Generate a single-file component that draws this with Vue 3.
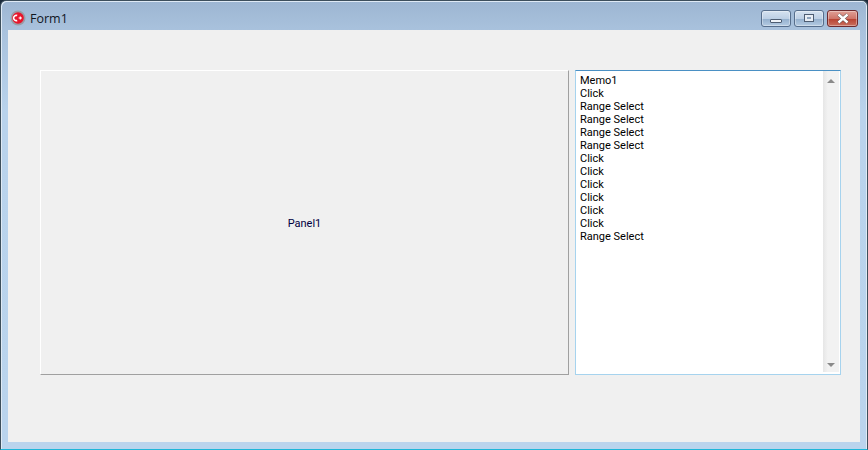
<script setup>
const lines = ['Memo1','Click','Range Select','Range Select','Range Select','Range Select','Click','Click','Click','Click','Click','Click','Range Select']
</script>

<template>
  <div class="window">
    <div class="titlebar">
      <svg class="appicon" width="16" height="16" viewBox="0 0 16 16">
        <circle cx="8" cy="8" r="7.5" fill="#9a9ca6" />
        <circle cx="8" cy="8" r="5.8" fill="#e8152c" />
        <path d="M7.2 5.6A2.6 2.6 0 1 0 7.2 10.4" fill="none" stroke="#fff" stroke-width="1.6" />
        <path d="M8.6 8h3.4M10.3 6.4v3.2" fill="none" stroke="#fff" stroke-width="1.2" />
      </svg>
      <span class="title">Form1</span>
      <div class="buttons">
        <div class="btn">
          <span class="min"></span>
        </div>
        <div class="btn">
          <span class="max"></span>
        </div>
        <div class="btn close">
          <svg width="14" height="11" viewBox="0 0 14 11">
            <path d="M2.5 1.5L11.5 9.5M11.5 1.5L2.5 9.5" stroke="#5a4a4a" stroke-width="3.6" fill="none" />
            <path d="M2.5 1.5L11.5 9.5M11.5 1.5L2.5 9.5" stroke="#fff" stroke-width="2.4" fill="none" />
          </svg>
        </div>
      </div>
    </div>
    <div class="client">
      <div class="panel">Panel1</div>
      <div class="memo">
        <div class="memotext">
          <div v-for="(l, i) in lines" :key="i" class="line">{{ l }}</div>
        </div>
        <div class="scroll">
          <span class="arrow up"></span>
          <span class="arrow down"></span>
        </div>
      </div>
    </div>
  </div>
</template>

<style>
html, body { margin: 0; background: #1a2a3a; }
</style>

<style scoped>
.window {
  width: 868px;
  height: 450px;
  box-sizing: border-box;
  display: flex;
  flex-direction: column;
  border: 1px solid #3d4f5c;
  border-bottom-color: #1fb6d8;
  border-radius: 6px 6px 0 0;
  padding: 0 7px 7px;
  background: linear-gradient(180deg, #9db6d2 0, #a9c2dd 30px, #b9d3ec 110px, #bad4ed 100%);
  box-shadow: inset 1px 1px 0 #dfeaf5, inset -1px 0 0 #dfeaf5;
  overflow: hidden;
}
.titlebar {
  height: 29px;
  flex: none;
  display: flex;
  align-items: center;
  padding: 5px 0 0 2px;
  box-sizing: border-box;
}
.title {
  margin-left: 4px;
  margin-top: 1px;
  font: 12.5px "Open Sans", sans-serif;
  color: #10161e;
}
.buttons {
  margin-left: auto;
  margin-right: 2px;
  display: flex;
  gap: 3px;
}
.btn {
  width: 30px;
  height: 17px;
  box-sizing: border-box;
  border: 1px solid #566e8c;
  border-radius: 3px;
  display: flex;
  align-items: center;
  justify-content: center;
  background: linear-gradient(180deg, #d5e2f0 0, #bdd0e5 50%, #93afcd 52%, #b4cbe2 100%);
  box-shadow: inset 0 0 0 1px rgba(255,255,255,.35);
}
.btn.close {
  width: 31px;
  border-color: #6e2a2e;
  background: linear-gradient(180deg, #e0a096 0, #d0766a 50%, #b8402f 52%, #c9705f 100%);
}
.min {
  display: block;
  width: 10px;
  height: 2px;
  margin-top: 5px;
  background: #eef3f8;
  border: 1px solid #4d5d72;
  border-radius: 1px;
}
.max {
  display: block;
  width: 4px;
  height: 2px;
  background: #8ea4bd;
  border: 2px solid #e8eef5;
  outline: 1px solid #4d5d72;
}
.client {
  flex: 1;
  box-sizing: border-box;
  background: #f0f0f0;
  padding: 40px 19px 67px 32px;
  display: flex;
  gap: 6px;
}
.panel {
  width: 529px;
  height: 305px;
  box-sizing: border-box;
  border: 1px solid;
  border-color: #fff #a0a0a0 #a0a0a0 #fff;
  padding-top: 2px;
  display: flex;
  align-items: center;
  justify-content: center;
  font: 11px Roboto, sans-serif;
  color: #000040;
}
.memo {
  width: 266px;
  height: 305px;
  box-sizing: border-box;
  border: 1px solid #a6d3ee;
  border-top-color: #4a90c4;
  background: #fff;
  display: flex;
}
.memotext {
  flex: 1;
  padding: 3px 0 0 4px;
  font: 11px/13px Roboto, sans-serif;
  color: #000;
}
.scroll {
  width: 16px;
  margin: 0 1px 2px 0;
  background: linear-gradient(90deg, #e6e6e6, #f2f2f2 30%, #f2f2f2);
  display: flex;
  flex-direction: column;
  justify-content: space-between;
  align-items: center;
  padding: 8px 0 5px;
  box-sizing: border-box;
}
.arrow {
  width: 0;
  height: 0;
  border-left: 4px solid transparent;
  border-right: 4px solid transparent;
}
.up { border-bottom: 4px solid #8a8a8a; }
.down { border-top: 4px solid #8a8a8a; }
</style>
